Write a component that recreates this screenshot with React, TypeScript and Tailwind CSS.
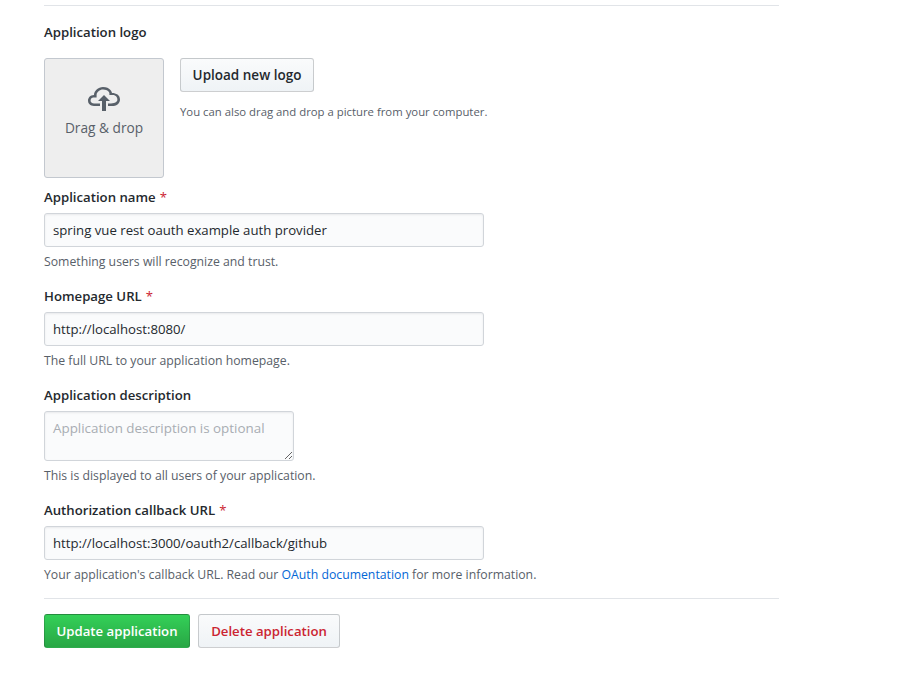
import React from 'react';

const Star = () => <span className="text-[#cb2431] ml-1 font-normal">*</span>;

const noteClass = 'mt-[6px] h-[17px] text-[12.25px] leading-[17px] text-[#586069]';
const labelClass = 'block h-[21px] mb-[5px] font-semibold leading-[21px]';
const inputClass =
  'block w-[440px] h-[34px] px-2 text-[13.2px] rounded-[3px] border border-[#d1d5da] bg-[#fafbfc] text-[#24292e] shadow-[inset_0_1px_2px_rgba(27,31,35,0.075)] outline-none';

const Field: React.FC<{ label: string; value: string; required?: boolean; last?: boolean; children: React.ReactNode }> = ({
  label,
  value,
  required,
  last,
  children,
}) => (
  <div className={last ? 'mb-[15px]' : 'mb-4'}>
    <label className={labelClass}>
      {label}
      {required && <Star />}
    </label>
    <input type="text" defaultValue={value} className={inputClass} />
    <p className={noteClass}>{children}</p>
  </div>
);

export default function App() {
  return (
    <div className="min-h-[676px] bg-white pl-11 pt-[5px] text-[13.2px] text-[#24292e] font-['Open_Sans',sans-serif]">
      <form className="w-[735px]">
        <hr className="border-0 border-t border-[#e1e4e8] mb-4" />

        <label className="block h-[21px] mb-[15px] font-semibold leading-[21px]">Application logo</label>
        <div className="flex gap-4 mb-[9px]">
          <div className="w-[120px] h-[120px] flex flex-col items-center rounded-[3px] border border-[#c3c8cf] bg-[#eeeeee] pt-6 text-[#586069]">
            <svg width="32" height="32" viewBox="0 0 16 16" fill="currentColor" aria-hidden="true">
              <path d="M7 9H5l3-3 3 3H9v5H7V9zm5-4c0-.44-.91-3-4.5-3C5.08 2 3 3.92 3 6 1.02 6 0 7.52 0 8.8c0 1.53 1 2.7 3 2.7h3v-1.3H3c-1.62 0-1.7-1.12-1.7-1.4 0-.17.05-1.5 1.7-1.5h1.3V6c0-1.39 1.56-2.7 3.2-2.7 2.55 0 3.13 1.55 3.2 1.8v.9h1.3c.81 0 2.7.22 2.7 2.4 0 1.5-2.38 1.8-3 1.8H10v1.3h2c2.08 0 4-1.16 4-3.3C16 6.06 14.08 5 12 5z" />
            </svg>
            <span className="mt-0.5 text-[13.7px] leading-[21px]">Drag &amp; drop</span>
          </div>
          <div>
            <button
              type="button"
              className="h-[34px] w-[134px] pt-px rounded-[3px] border border-[rgba(27,31,35,0.2)] bg-gradient-to-b from-[#fafbfc] to-[#eff3f6] text-[13.5px] font-semibold"
            >
              Upload new logo
            </button>
            <p className="mt-[11px] text-[11.35px] leading-[17px] text-[#586069]">You can also drag and drop a picture from your computer.</p>
          </div>
        </div>

        <Field label="Application name" value="spring vue rest oauth example auth provider" required>
          Something users will recognize and trust.
        </Field>
        <Field label="Homepage URL" value="http://localhost:8080/" required>
          The full URL to your application homepage.
        </Field>

        <div className="mb-4">
          <label className={labelClass}>Application description</label>
          <textarea
            placeholder="Application description is optional"
            className="block w-[250px] h-[50px] px-2 py-[6px] text-[13.4px] leading-[20px] rounded-[3px] border border-[#d1d5da] bg-[#fafbfc] shadow-[inset_0_1px_2px_rgba(27,31,35,0.075)] outline-none placeholder:text-[#a8adb3]"
          />
          <p className={noteClass}>This is displayed to all users of your application.</p>
        </div>

        <Field label="Authorization callback URL" value="http://localhost:3000/oauth2/callback/github" required last>
          Your application's callback URL. Read our <a className="text-[#0366d6]">OAuth documentation</a> for more information.
        </Field>

        <hr className="border-0 border-t border-[#e1e4e8] mb-[15px]" />

        <div className="flex gap-2">
          <button
            type="button"
            className="h-[34px] w-[146px] pt-px rounded-[3px] border border-[rgba(27,31,35,0.2)] bg-gradient-to-b from-[#34d058] to-[#28a745] font-semibold text-white"
          >
            Update application
          </button>
          <button
            type="button"
            className="h-[34px] w-[142px] pt-px rounded-[3px] border border-[rgba(27,31,35,0.2)] bg-gradient-to-b from-[#fafbfc] to-[#eff3f6] font-semibold text-[#cb2431]"
          >
            Delete application
          </button>
        </div>
      </form>
    </div>
  );
}
